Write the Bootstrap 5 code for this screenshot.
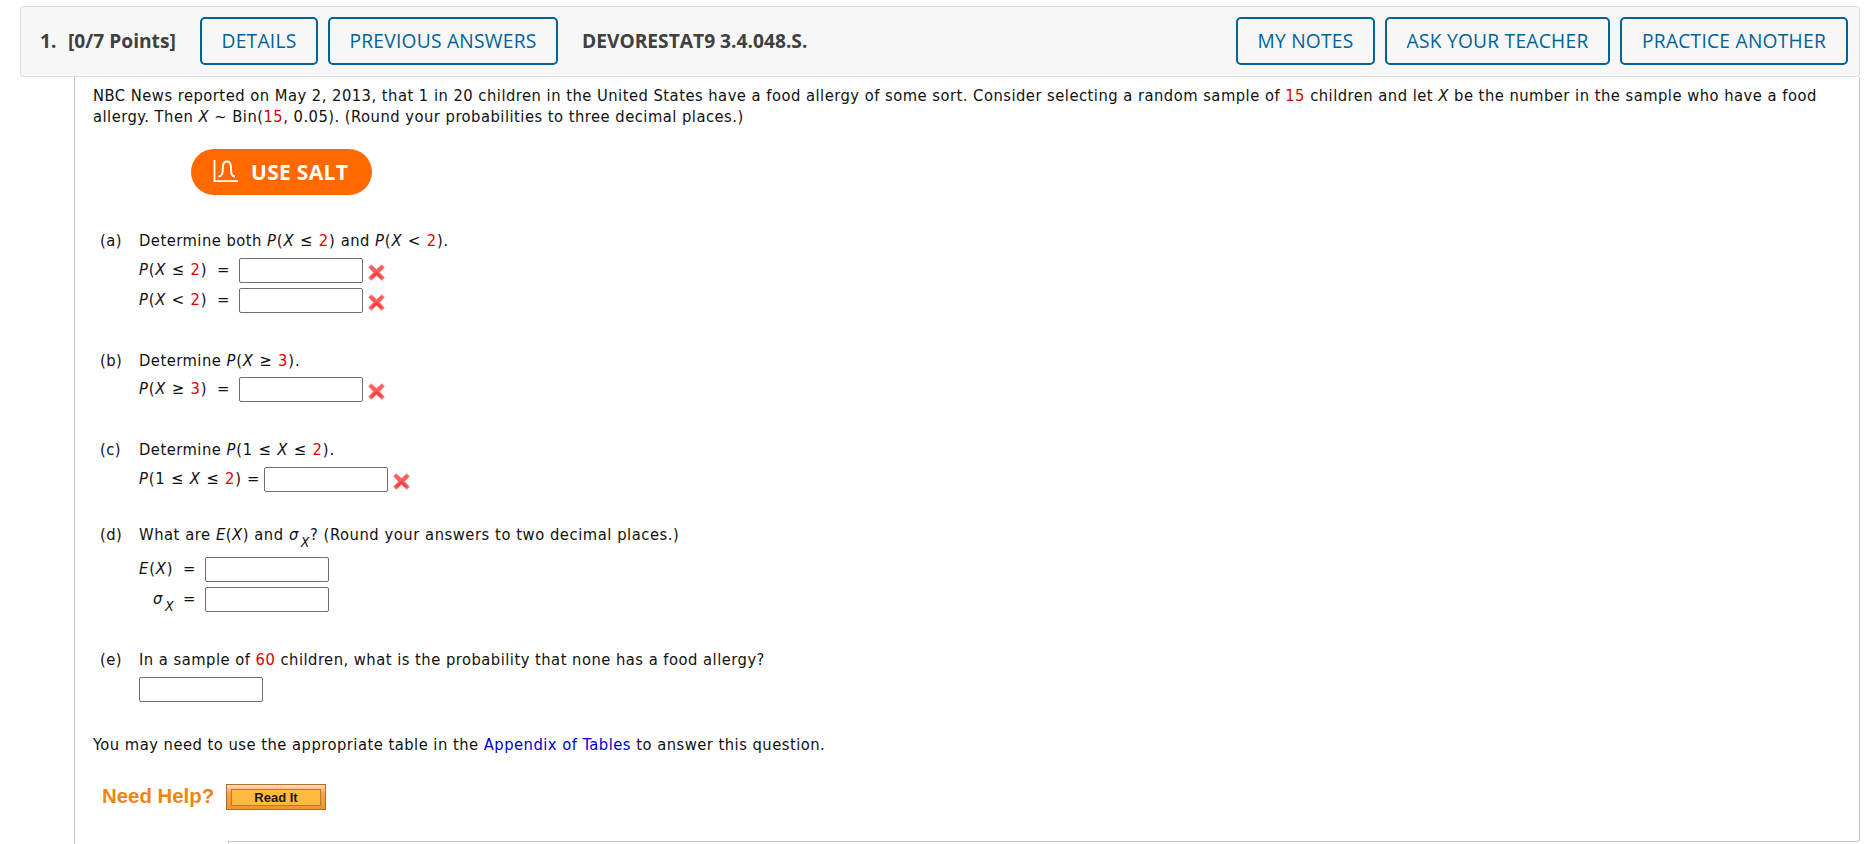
<!DOCTYPE html>
<html lang="en">
<head>
    <meta charset="UTF-8">
    <meta name="viewport" content="width=device-width, initial-scale=1.0">
    <title>DEVORESTAT9 3.4.048.S.</title>
    <link href="https://cdn.jsdelivr.net/npm/bootstrap@5.3.0/dist/css/bootstrap.min.css" rel="stylesheet">
    <style>
        body {
            height: 844px;
            overflow: hidden;
            padding: 6px 8px 0 20px;
            color: #111;
            font-family: "DejaVu Sans Condensed", "DejaVu Sans", sans-serif;
            font-stretch: condensed;
            font-size: 16.4px;
            line-height: 21px;
            letter-spacing: .485px;
            white-space: nowrap;
        }
        .q-header {
            height: 71px;
            padding: 0 11px 0 19px;
            background: #f7f7f7;
            border: 1px solid #ddd;
            border-radius: 3px;
            color: #404040;
            font: 700 19.2px/48px "Open Sans", sans-serif;
            letter-spacing: 0;
        }
        .q-bar { margin-bottom: 1px; }
        .q-header .btn {
            height: 48px;
            padding: 0;
            border: 2px solid #006298;
            border-radius: 5px;
            color: #006298;
            font: 500 19.2px/44px "Open Sans", sans-serif;
            letter-spacing: .25px;
        }
        .btn-row { gap: 10px; }
        .w-details { width: 118px; }
        .w-previous { width: 230px; }
        .w-notes { width: 139px; }
        .w-teacher { width: 225px; }
        .w-practice { width: 228px; }
        .q-number { width: 28px; }
        .q-points { width: 132px; }
        .q-title { margin-left: 24px; }
        .q-body { margin-left: 54px; height: 767px; border-left: 1px solid #c4c4c4; }
        .q-content { height: 753px; padding: 8px 0 0 18px; border-right: 1px solid #c4c4c4; }
        .q-foot {
            height: 12px;
            margin-left: 153px;
            border: solid #c4c4c4;
            border-width: 0 1px 1px 0;
            border-radius: 0 0 4px 0;
        }
        .q-next { height: 2px; margin-left: 153px; border-left: 1px solid #c4c4c4; }
        .salt {
            width: 181px;
            height: 46px;
            margin: 22px 0 35px 98px;
            padding-left: 22px;
            border-radius: 23px;
            background: #ff6900;
            color: #fff;
            font: 700 21px/46px "Open Sans", sans-serif;
            letter-spacing: .3px;
        }
        .salt svg { margin: 0 13px 2px 0; }
        .part { margin-left: 7px; }
        .part-label { width: 39px; }
        .part-gap { margin-top: 37px; }
        .part-gap-sm { margin-top: 32px; }
        .answer { height: 25px; margin: 0 0 5px; line-height: 24px; }
        .answer:last-child { margin-bottom: 0; }
        .prompt { margin-bottom: 7px; }
        .prompt-b { margin-bottom: 6px; }
        .prompt-d { margin-bottom: 12px; letter-spacing: .55px; }
        .expr { letter-spacing: .85px; }
        .eq { width: 100px; }
        .eq-wide { width: 125px; }
        .eq-short { width: 66px; }
        .eq-sign { width: 22px; }
        .num { color: #e00000; }
        .answer input {
            width: 124px;
            height: 25px;
            padding: 0 4px;
            border: 1px solid #6e6e6e;
            border-radius: 2px;
            background: #fff;
        }
        .answer svg { margin: 6px 0 0 5px; }
        .sub-x { position: relative; top: 7px; margin-left: 2px; font-size: 14px; line-height: 1; }
        .sigma { margin-right: 9px; }
        .link-tables { color: #0000d0; text-decoration: none; }
        .help { margin: 29px 0 0 9px; height: 26px; }
        .help-label {
            width: 124px;
            color: #ee8510;
            font: 700 20.4px/25px "Liberation Sans", sans-serif;
            letter-spacing: 0;
        }
        .read-it {
            width: 100px;
            height: 26px;
            padding: 4px;
            border: 1px solid #b06c2c;
            background: linear-gradient(#ffdcc0, #f7a04a 35%, #f39330);
            color: #241a08;
            font: 700 13px/16px "Liberation Sans", sans-serif;
            letter-spacing: 0;
        }
        .read-it span {
            display: block;
            height: 17px;
            border: 1px solid #b97a30;
            background: #ffb941;
            text-align: center;
        }
    </style>
</head>
<body>
<!-- shared icons -->
<svg width="0" height="0" class="d-none">
    <symbol id="wrong" viewBox="0 0 16 16">
        <path d="M3 .6 8 5 13 .6 15.5 3 11 8l4.5 5L13 15.5 8 11 3 15.5.5 13 5 8 .5 3Z" fill="#fb5c5c" stroke="#ff9a9a" stroke-width=".8" stroke-linejoin="round"/>
        <path d="M3.5 12.8 8 8.7l4.5 4.1" fill="none" stroke="#f53c3c" stroke-width="1.8"/>
    </symbol>
</svg>

<header class="q-header d-flex align-items-center">
    <div class="q-bar d-flex align-items-center w-100">
        <span class="q-number">1.</span>
        <span class="q-points">[0/7 Points]</span>
        <div class="btn-row d-flex">
            <button type="button" class="btn w-details">DETAILS</button>
            <button type="button" class="btn w-previous">PREVIOUS ANSWERS</button>
        </div>
        <span class="q-title">DEVORESTAT9 3.4.048.S.</span>
        <div class="btn-row d-flex ms-auto">
            <button type="button" class="btn w-notes">MY NOTES</button>
            <button type="button" class="btn w-teacher">ASK YOUR TEACHER</button>
            <button type="button" class="btn w-practice">PRACTICE ANOTHER</button>
        </div>
    </div>
</header>

<main class="q-body">
    <div class="q-content">
        <div>NBC News reported on May 2, 2013, that 1 in 20 children in the United States have a food allergy of some sort. Consider selecting a random sample of <span class="num">15</span> children and let <i>X</i> be the number in the sample who have a food<br>
        allergy. Then <i>X</i> ~ Bin(<span class="num">15</span>, 0.05). (Round your probabilities to three decimal places.)</div>

        <div class="salt d-flex align-items-center">
            <svg width="25" height="23" viewBox="0 0 25 23" fill="none" stroke="#fff" stroke-width="1.8"><path d="M1.5 0v21.2H25"/><path d="M5.5 16.5c5-.5 4-5 4.400-10 .3-3.500 1.700-5 4-5s3.700 1.500 4 5c.4 5-.6 9.500 4.100 10" stroke-width="2"/></svg>
            <span>USE SALT</span>
        </div>

        <section class="part d-flex">
            <div class="part-label">(a)</div>
            <div>
                <div class="prompt">Determine both <span class="expr"><i>P</i>(<i>X</i> ≤ <span class="num">2</span>)</span> and <span class="expr"><i>P</i>(<i>X</i> &lt; <span class="num">2</span>)</span>.</div>
                <div class="answer d-flex">
                    <div class="eq d-flex justify-content-between"><span class="expr"><i>P</i>(<i>X</i> ≤ <span class="num">2</span>)</span><span class="eq-sign">=</span></div>
                    <input type="text"><svg width="17" height="17"><use href="#wrong"/></svg>
                </div>
                <div class="answer d-flex">
                    <div class="eq d-flex justify-content-between"><span class="expr"><i>P</i>(<i>X</i> &lt; <span class="num">2</span>)</span><span class="eq-sign">=</span></div>
                    <input type="text"><svg width="17" height="17"><use href="#wrong"/></svg>
                </div>
            </div>
        </section>

        <section class="part part-gap d-flex">
            <div class="part-label">(b)</div>
            <div>
                <div class="prompt-b">Determine <span class="expr"><i>P</i>(<i>X</i> ≥ <span class="num">3</span>)</span>.</div>
                <div class="answer d-flex">
                    <div class="eq d-flex justify-content-between"><span class="expr"><i>P</i>(<i>X</i> ≥ <span class="num">3</span>)</span><span class="eq-sign">=</span></div>
                    <input type="text"><svg width="17" height="17"><use href="#wrong"/></svg>
                </div>
            </div>
        </section>

        <section class="part part-gap d-flex">
            <div class="part-label">(c)</div>
            <div>
                <div class="prompt">Determine <span class="expr"><i>P</i>(1 ≤ <i>X</i> ≤ <span class="num">2</span>)</span>.</div>
                <div class="answer d-flex">
                    <div class="eq-wide"><span class="expr"><i>P</i>(1 ≤ <i>X</i> ≤ <span class="num">2</span>)</span> =</div>
                    <input type="text"><svg width="17" height="17"><use href="#wrong"/></svg>
                </div>
            </div>
        </section>

        <section class="part part-gap-sm d-flex">
            <div class="part-label">(d)</div>
            <div>
                <div class="prompt-d">What are <i>E</i>(<i>X</i>) and <i>σ</i><i class="sub-x">X</i>? (Round your answers to two decimal places.)</div>
                <div class="answer d-flex">
                    <div class="eq-short d-flex justify-content-between"><span class="expr"><i>E</i>(<i>X</i>)</span><span class="eq-sign">=</span></div>
                    <input type="text">
                </div>
                <div class="answer d-flex">
                    <div class="eq-short d-flex justify-content-end"><span class="sigma"><i>σ</i><i class="sub-x">X</i></span><span class="eq-sign">=</span></div>
                    <input type="text">
                </div>
            </div>
        </section>

        <section class="part part-gap d-flex">
            <div class="part-label">(e)</div>
            <div>
                <div class="prompt">In a sample of <span class="num">60</span> children, what is the probability that none has a food allergy?</div>
                <div class="answer d-flex"><input type="text"></div>
            </div>
        </section>

        <div class="part-gap-sm">You may need to use the appropriate table in the <a href="#" class="link-tables">Appendix of Tables</a> to answer this question.</div>

        <div class="help d-flex">
            <span class="help-label">Need Help?</span>
            <div class="read-it"><span>Read It</span></div>
        </div>
    </div>
    <div class="q-foot"></div>
    <div class="q-next"></div>
</main>
<script src="https://cdn.jsdelivr.net/npm/bootstrap@5.3.0/dist/js/bootstrap.bundle.min.js"></script>
</body>
</html>
